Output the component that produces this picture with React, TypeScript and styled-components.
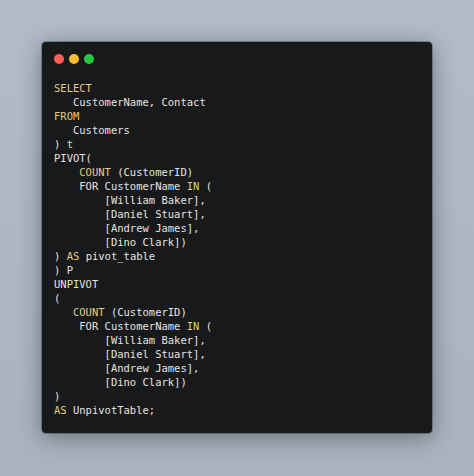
import React from "react";
import styled, { createGlobalStyle } from "styled-components";

const Global = createGlobalStyle`
  html, body { margin: 0; padding: 0; }
  body { background: #aab5c0; }
`;

const Page = styled.div`
  width: 474px;
  height: 476px;
  display: flex;
  align-items: flex-start;
  justify-content: center;
  padding-top: 42px;
  box-sizing: border-box;
  background: linear-gradient(180deg, #b2bcc6 0%, #a8b3be 100%);
`;

const Window = styled.div`
  width: 390px;
  height: 391px;
  box-sizing: border-box;
  background: #18191b;
  border-radius: 4px;
  box-shadow: 0 4px 22px rgba(20, 28, 40, 0.45), 0 0 0 1px rgba(0, 0, 0, 0.25);
  padding: 12px 12px;
  display: flex;
  flex-direction: column;
  gap: 17px;
`;

const Dots = styled.div`
  display: flex;
  gap: 5px;
  padding-left: 0;
`;

const Dot = styled.span<{ $c: string }>`
  width: 10px;
  height: 10px;
  border-radius: 50%;
  background: ${(p) => p.$c};
`;

const Code = styled.pre`
  margin: 0;
  font-family: "DejaVu Sans Mono", monospace;
  font-size: 10.5px;
  line-height: 14px;
  color: #e4e4e2;
  white-space: pre;
`;

const K = styled.span`
  color: #e3cd82;
`;

export default function App() {
  return (
    <>
      <Global />
      <Page>
        <Window>
          <Dots>
            <Dot $c="#fd5f57" />
            <Dot $c="#fdbc2e" />
            <Dot $c="#29c840" />
          </Dots>
          <Code>
            <K>SELECT</K>{"\n"}
            {"   CustomerName, Contact\n"}
            <K>FROM</K>{"\n"}
            {"   Customers\n"}
            {") t\n"}
            {"PIVOT(\n"}
            {"    "}<K>COUNT</K>{" (CustomerID)\n"}
            {"    FOR CustomerName "}<K>IN</K>{" (\n"}
            {"        [William Baker],\n"}
            {"        [Daniel Stuart],\n"}
            {"        [Andrew James],\n"}
            {"        [Dino Clark])\n"}
            {") "}<K>AS</K>{" pivot_table\n"}
            {") P\n"}
            {"UNPIVOT\n"}
            {"(\n"}
            {"   "}<K>COUNT</K>{" (CustomerID)\n"}
            {"    FOR CustomerName "}<K>IN</K>{" (\n"}
            {"        [William Baker],\n"}
            {"        [Daniel Stuart],\n"}
            {"        [Andrew James],\n"}
            {"        [Dino Clark])\n"}
            {")\n"}
            <K>AS</K>{" UnpivotTable;"}
          </Code>
        </Window>
      </Page>
    </>
  );
}
